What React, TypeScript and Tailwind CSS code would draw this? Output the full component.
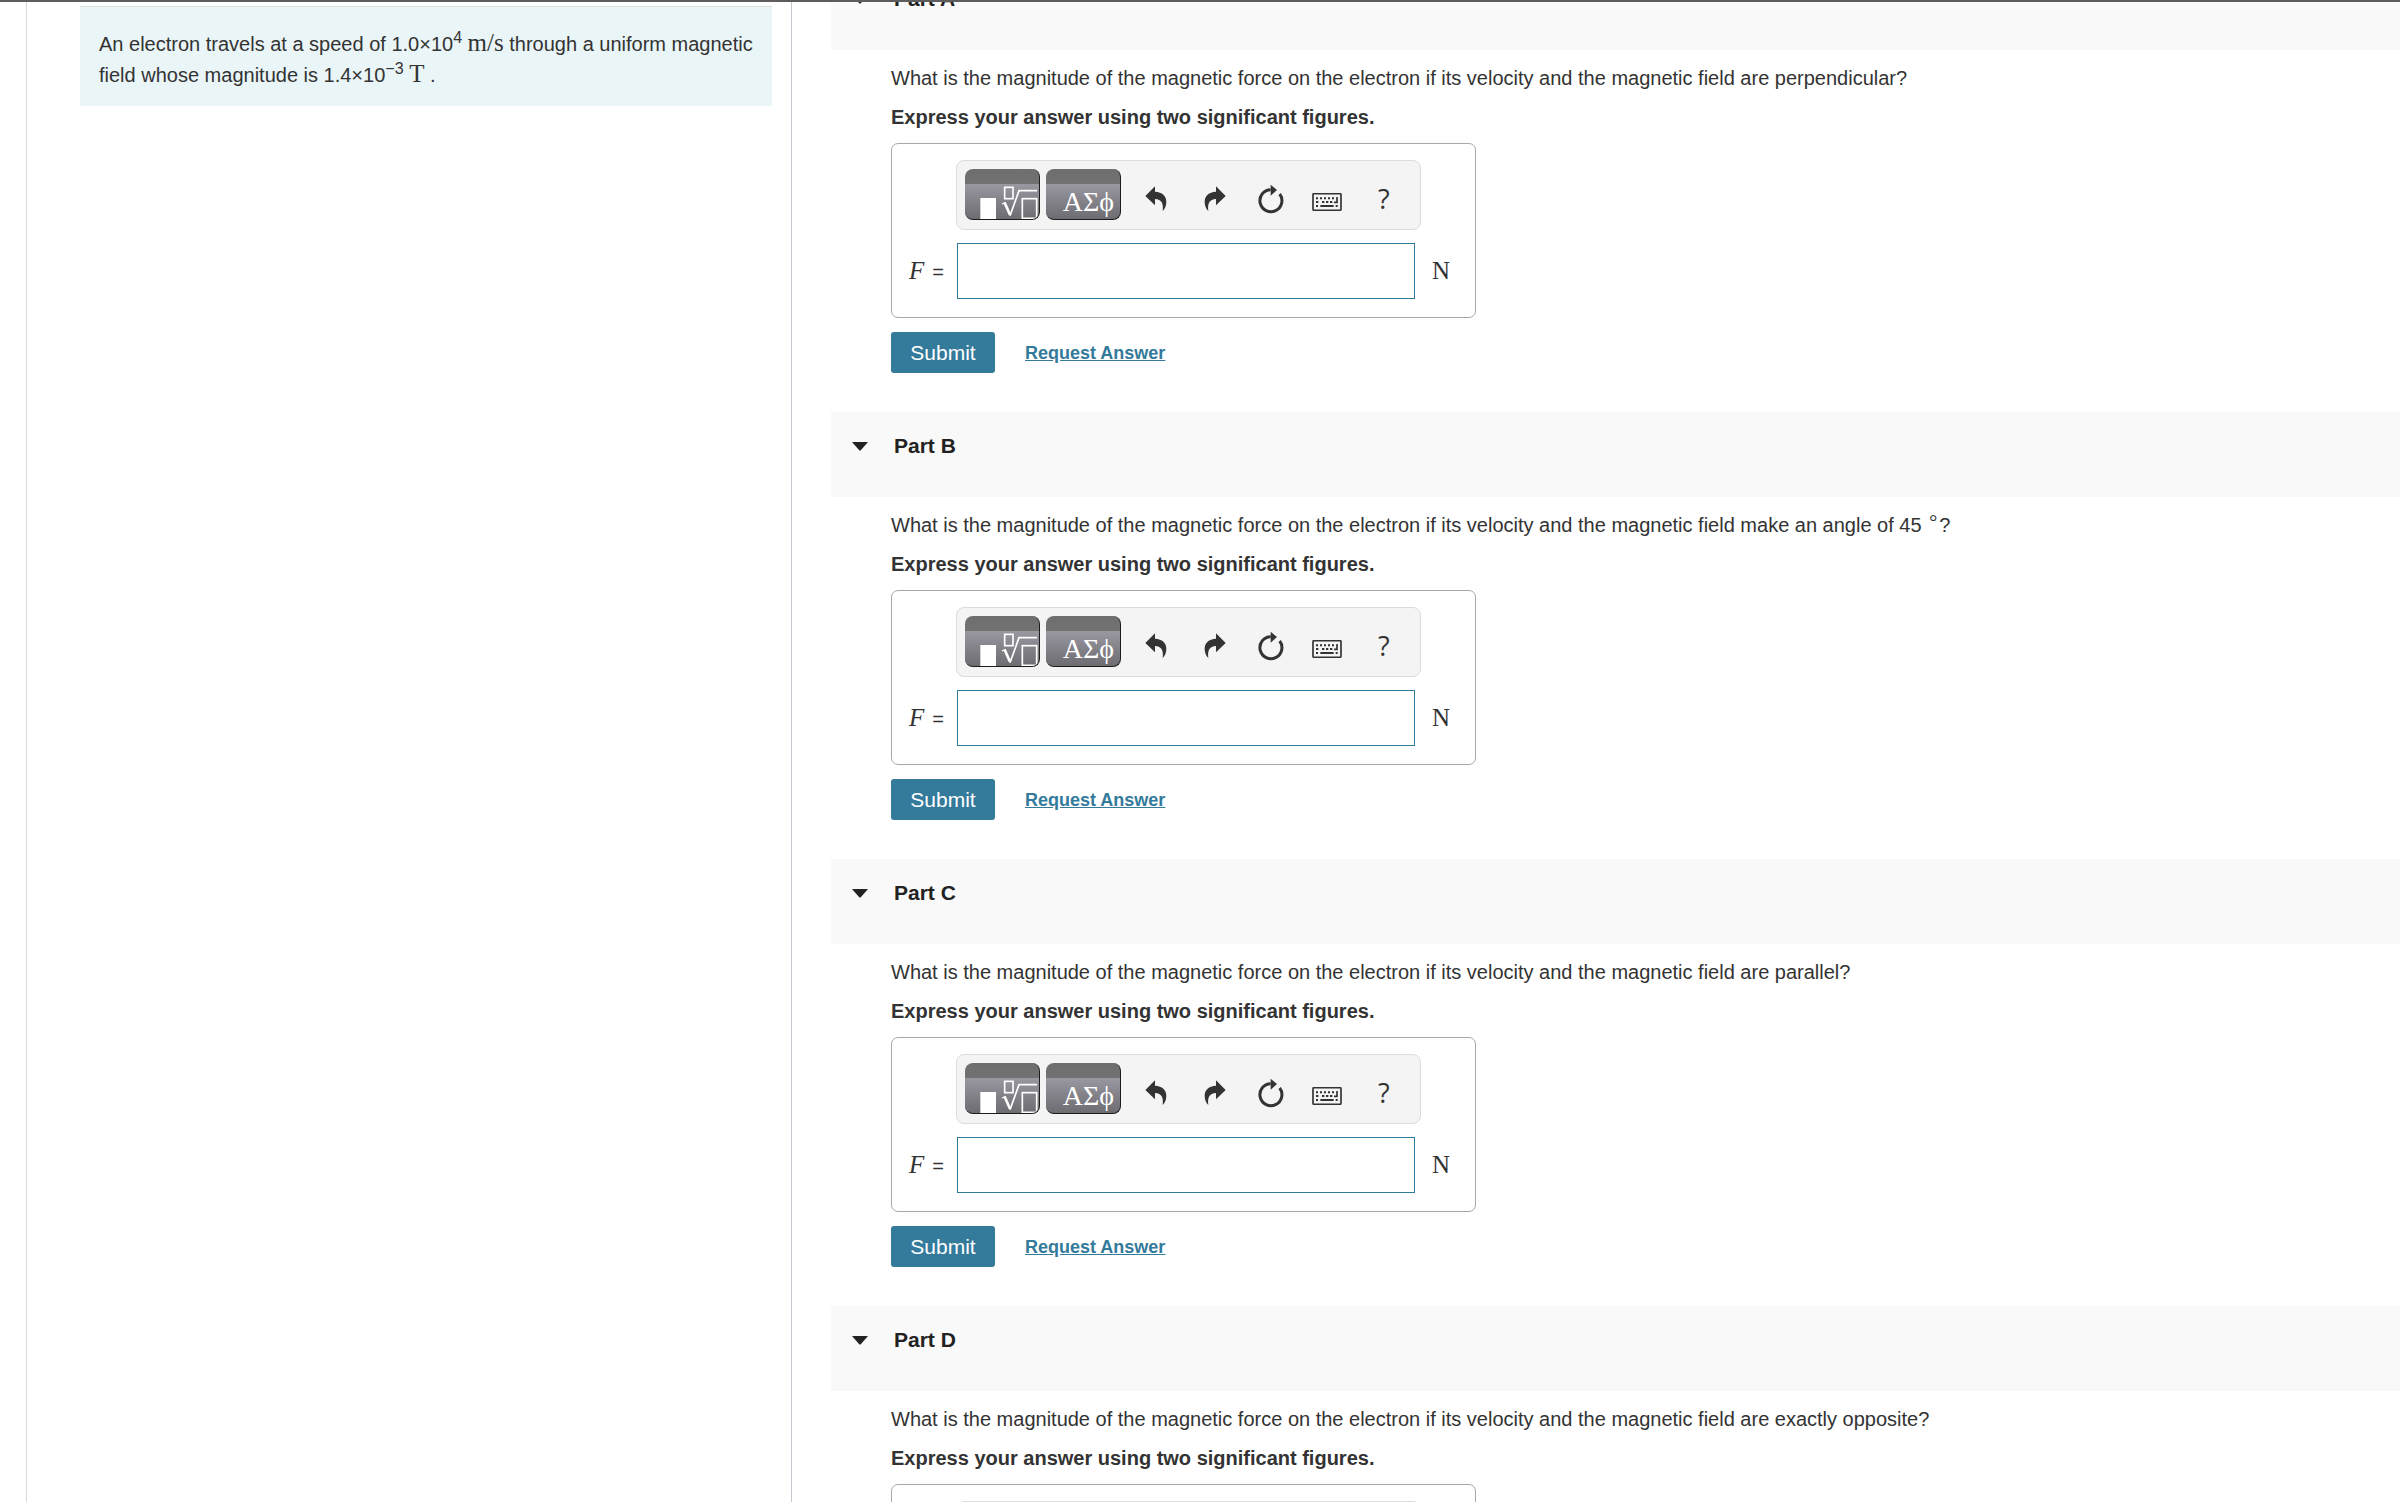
import { ChangeEvent, ReactNode, useState } from 'react';

interface PartData {
  id: string;
  question: ReactNode;
}

const PARTS: PartData[] = [
  {
    id: 'A',
    question:
      'What is the magnitude of the magnetic force on the electron if its velocity and the magnetic field are perpendicular?',
  },
  {
    id: 'B',
    question: (
      <>
        What is the magnitude of the magnetic force on the electron if its velocity and the magnetic field make an
        angle of 45 <span className="mx-0.5 align-[3px] font-['Liberation_Serif',serif] leading-4">°</span>?
      </>
    ),
  },
  {
    id: 'C',
    question:
      'What is the magnitude of the magnetic force on the electron if its velocity and the magnetic field are parallel?',
  },
  {
    id: 'D',
    question:
      'What is the magnitude of the magnetic force on the electron if its velocity and the magnetic field are exactly opposite?',
  },
];

const RootIcon = () => (
  <svg viewBox="0 0 225 153" className="h-[51px] w-[75px]" fill="none" stroke="#fff" aria-hidden="true">
    <rect x="46" y="87" width="47" height="63" fill="#fff" stroke="none" />
    <rect x="119" y="55" width="25" height="34" strokeWidth="5" />
    <path d="M111 105 L122 100" strokeWidth="4" />
    <path d="M119 101 L135 137" strokeWidth="8" />
    <path d="M135 140 L162 65 H216" strokeWidth="5" />
    <rect x="172" y="89" width="43" height="59" strokeWidth="5" />
  </svg>
);

const UndoIcon = () => (
  <svg viewBox="0 0 66 78" className="h-[26px] w-[22px]" fill="#333" aria-hidden="true">
    <path d="M1 30 L30 1 V17 C52 18 64 30 64 47 C64 58 60 68 53 75 C56 53 50 40 30 39 V58 Z" />
  </svg>
);

const RedoIcon = () => (
  <svg viewBox="0 0 66 78" className="h-[26px] w-[22px]" fill="#333" aria-hidden="true">
    <path d="M65 30 L36 1 V17 C14 18 2 30 2 47 C2 58 6 68 13 75 C10 53 16 40 36 39 V58 Z" />
  </svg>
);

const ResetIcon = () => (
  <svg viewBox="0 0 78 90" className="h-[30px] w-[26px]" fill="none" aria-hidden="true">
    <path d="M38 17 A33 33 0 1 0 65 30" stroke="#333" strokeWidth="9" />
    <path d="M38 2 L57 18 L38 35 Z" fill="#333" />
  </svg>
);

const KeyboardIcon = () => (
  <svg viewBox="0 0 90 54" className="h-[18px] w-[30px]" fill="none" stroke="#333" aria-hidden="true">
    <rect x="3" y="2" width="84" height="50" rx="3" strokeWidth="5" />
    <path d="M12 16 H70" strokeWidth="6" strokeDasharray="6 6" />
    <path d="M12 27 H24 M30 27 H66" strokeWidth="6" strokeDasharray="7 5" />
    <path d="M66 28 H75 V12" strokeWidth="5" />
    <path d="M12 39 H18 M25 39 H65 M71 39 H77" strokeWidth="6" />
  </svg>
);

const PALETTE_BUTTON =
  'h-[51px] w-[75px] overflow-hidden rounded-lg border-r border-b border-[#1c1c1c] bg-[linear-gradient(to_bottom,#6e6e6e_0px,#727272_15px,#9997a0_15px,#6c6b70_51px)] text-white';

const Toolbar = () => (
  <div className="flex h-[70px] w-[465px] items-start rounded-lg border border-[#dcdcdc] bg-[#f4f4f4] pt-2 pl-2">
    <button type="button" aria-label="Templates" className={PALETTE_BUTTON}>
      <RootIcon />
    </button>
    <button
      type="button"
      aria-label="Symbols"
      className={`${PALETTE_BUTTON} ml-[6px] pt-[15px] pr-[6px] text-right font-['Liberation_Serif',serif] text-[28px] leading-8`}
    >
      ΑΣϕ
    </button>
    <div className="ml-6 flex h-[60px] items-center">
      <button type="button" aria-label="Undo">
        <UndoIcon />
      </button>
      <button type="button" aria-label="Redo" className="ml-[37px]">
        <RedoIcon />
      </button>
      <button type="button" aria-label="Reset" className="ml-8">
        <ResetIcon />
      </button>
      <button type="button" aria-label="Keyboard shortcuts" className="ml-7 pt-[6px]">
        <KeyboardIcon />
      </button>
      <button
        type="button"
        aria-label="Help"
        className="ml-9 font-['Open_Sans',sans-serif] text-[27px] leading-8 text-[#333]"
      >
        ?
      </button>
    </div>
  </div>
);

const AnswerBox = ({ id }: { id: string }) => {
  const [value, setValue] = useState('');

  return (
    <div className="w-[585px] rounded-[7px] border border-[#a8a8a8] pt-4 pb-[18px]">
      <div className="ml-16">
        <Toolbar />
      </div>
      <div className="mt-[13px] flex items-center">
        <label htmlFor={`answer-${id}`} className="flex w-[65px] items-baseline gap-2 pl-[17px]">
          <i className="font-['Liberation_Serif',serif] text-[25px]">F</i>
          <span>=</span>
        </label>
        <input
          id={`answer-${id}`}
          type="text"
          autoComplete="off"
          value={value}
          onChange={(e: ChangeEvent<HTMLInputElement>) => setValue(e.target.value)}
          className="h-14 w-[458px] border border-[#317a9b] bg-white px-2 outline-none"
        />
        <span className="ml-[17px] font-['Liberation_Serif',serif] text-[25px]">N</span>
      </div>
    </div>
  );
};

const Part = ({ id, question }: PartData) => {
  const [open, setOpen] = useState(true);

  return (
    <section className="pb-[39px]">
      <h2 className="h-[85px] bg-[#f9f9f9] pt-5 pl-[21px]">
        <button
          type="button"
          aria-expanded={open}
          onClick={() => setOpen(!open)}
          className="flex items-center gap-[26px] text-[21px] leading-[27px] font-bold text-[#222]"
        >
          <svg viewBox="0 0 16 9" className="mt-px h-[9px] w-4" fill="#222" aria-hidden="true">
            <path d="M0 0 H16 L9 8 Q8 9 7 8 Z" />
          </svg>
          Part {id}
        </button>
      </h2>
      {open && (
        <div className="pt-4 pl-[60px]">
          <p>{question}</p>
          <p className="mt-[15px] mb-[14px] font-bold">Express your answer using two significant figures.</p>
          <AnswerBox id={id} />
          <div className="mt-[14px] flex items-center gap-[30px]">
            <button type="button" className="h-[41px] w-[104px] rounded-[3px] bg-[#337a9b] text-[21px] text-white">
              Submit
            </button>
            <a href="#request" className="text-[18px] font-bold text-[#337a9b] underline">
              Request Answer
            </a>
          </div>
        </div>
      )}
    </section>
  );
};

const App = () => (
  <div className="flex h-screen overflow-hidden border-t-2 border-[#5e5c5d] bg-white font-['Liberation_Sans',Arial,sans-serif] text-[20px] leading-6 text-[#333]">
    <aside className="w-[33%] shrink-0 border-r border-[#c3c9d0] pl-[26px]">
      <div className="h-full border-l border-[#d8d8d8] pt-1 pr-[19px] pl-[53px]">
        <p className="border-t border-[#dcdfdf] bg-[#eaf5f7] pt-[22px] pb-[15px] pl-[19px] leading-[31px]">
          An electron travels at a speed of 1.0×10
          <sup className="text-[16px]">4</sup>{' '}
          <span className="font-['Liberation_Serif',serif] text-[25px] leading-none">m/s</span> through a uniform magnetic
          field whose magnitude is 1.4×10<sup className="text-[16px]">−3</sup>{' '}
          <span className="font-['Liberation_Serif',serif] text-[25px] leading-none">T</span> .
        </p>
      </div>
    </aside>
    <main className="-mt-[37px] ml-[39px] flex-1">
      {PARTS.map((part) => (
        <Part key={part.id} {...part} />
      ))}
    </main>
  </div>
);

export default App;
